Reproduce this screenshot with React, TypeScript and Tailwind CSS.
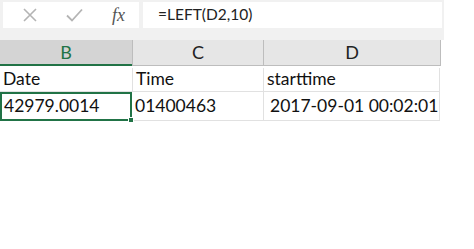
import React from "react";

const font = { fontFamily: "Lato, 'Liberation Sans', sans-serif" };

function FormulaBar() {
  return (
    <div className="flex h-[40px] w-[444px] bg-[#f1f1f1] pt-[2px]">
      <div className="ml-[3px] flex h-[26px] w-[136px] items-center bg-white">
        {/* cancel */}
        <svg width="14" height="14" viewBox="0 0 14 14" className="ml-[20px]">
          <path d="M1 1 L13 13 M13 1 L1 13" stroke="#b4b4b4" strokeWidth="1.6" fill="none" />
        </svg>
        {/* enter */}
        <svg width="17" height="14" viewBox="0 0 17 14" className="ml-[29px]">
          <path d="M1 7.5 L6 12.5 L16 1.5" stroke="#b4b4b4" strokeWidth="1.8" fill="none" />
        </svg>
        <span
          className="ml-[29px] text-[18px] italic text-[#555]"
          style={{ fontFamily: "'Liberation Serif', serif" }}
        >
          fx
        </span>
      </div>
      <div
        className="ml-[4px] flex h-[26px] w-[299px] items-center bg-white pl-[15px] text-[15.5px] text-[#222]"
        style={font}
      >
        =LEFT(D2,10)
      </div>
    </div>
  );
}

function Grid() {
  const cols = ["w-[132px]", "w-[131px]", "w-[177px]"];
  return (
    <div className="w-[441px]" style={font}>
      <div className="flex h-[26px]">
        <div className="flex w-[132px] items-center justify-center border-b-2 border-[#217346] bg-[#d4d4d4] text-[18px] text-[#217346]">
          B
        </div>
        <div className="flex w-[131px] items-center justify-center border-b border-l border-[#bdbdbd] bg-[#e6e6e6] text-[18px] text-[#222]">
          C
        </div>
        <div className="flex w-[178px] items-center justify-center border-b border-l border-r border-[#bdbdbd] bg-[#e6e6e6] text-[18px] text-[#222]">
          D
        </div>
      </div>
      <div className="flex h-[26px] pt-[2px] text-[17.5px] text-[#111]">
        <div className={`${cols[0]} flex items-center border-b border-[#e1e1e1] pl-[3px]`}>Date</div>
        <div className={`${cols[1]} flex items-center border-b border-l border-[#e1e1e1] pl-[3px]`}>Time</div>
        <div className={`${cols[2]} flex items-center border-b border-l border-r border-[#e1e1e1] pl-[3px]`}>starttime</div>
      </div>
      <div className="flex h-[29px] text-[17.5px] text-[#111]">
        <div className="relative flex w-[132px] items-center border-2 border-[#217346] pl-[2px]">
          42979.0014
          <div className="absolute bottom-[-4px] right-[-4px] h-[6px] w-[6px] border border-white bg-[#217346]" />
        </div>
        <div className={`${cols[1]} flex items-center border-b border-[#e1e1e1] pl-[3px]`}>01400463</div>
        <div className={`${cols[2]} flex items-center border-b border-l border-r border-[#e1e1e1] pl-[6px]`}>
          2017-09-01 00:02:01
        </div>
      </div>
    </div>
  );
}

export default function App() {
  return (
    <div className="h-[249px] w-[474px] overflow-hidden bg-white">
      <FormulaBar />
      <Grid />
    </div>
  );
}
